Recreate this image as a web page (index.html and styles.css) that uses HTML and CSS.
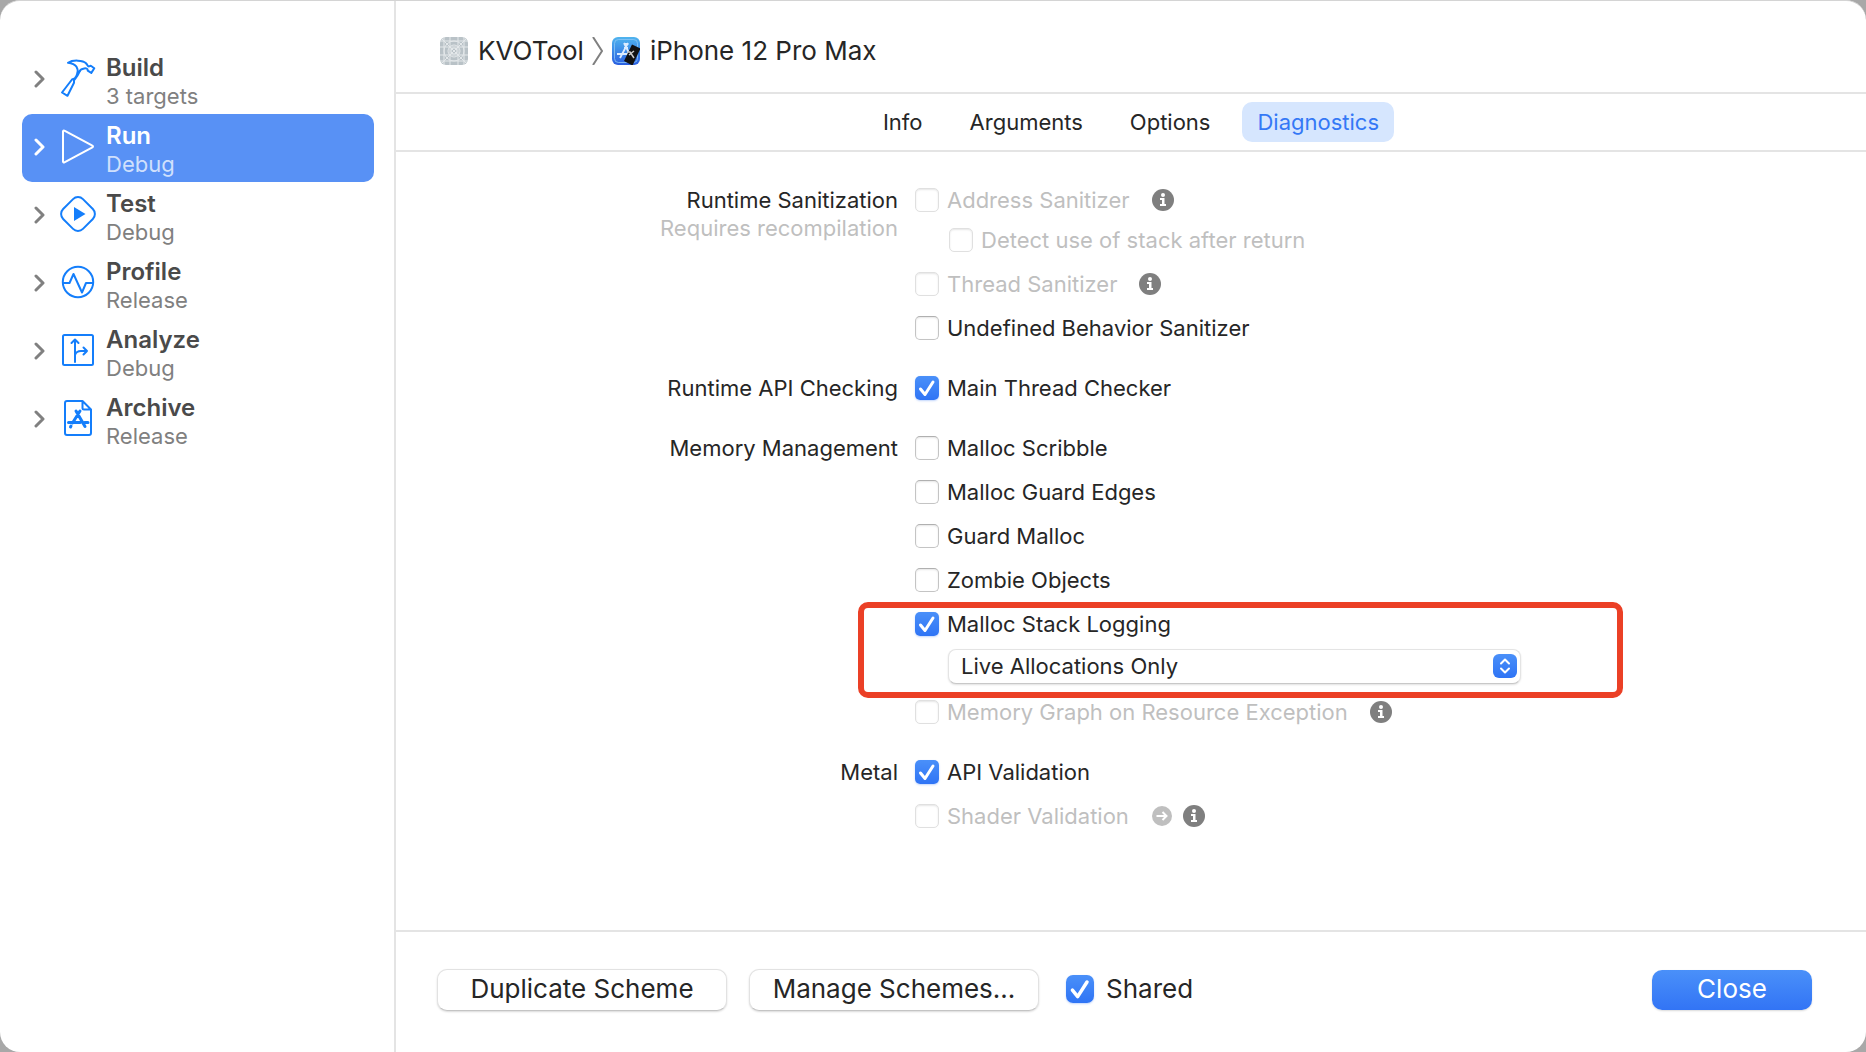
FILE: index.html
```html
<!DOCTYPE html>
<html lang="en">
<head>
    <meta charset="UTF-8">
    <meta name="viewport" content="width=device-width, initial-scale=1.0">
    <title>Edit Scheme</title>
    <link rel="stylesheet" href="styles.css">
</head>
<body>

    <div class="window">
        <nav class="sidebar">
            <a href="#build" class="action">
                <svg class="chevron" viewBox="0 0 12 18"><path d="M2 2l7 7-7 7"/></svg>
                <svg class="action-icon" viewBox="0 0 36 36"><path d="M8 2.800C13 -.5 23 .2 26 3.200c1.500 1.500 1.500 3 3 3.200l1.800-.6 3.500 2.400-3 4.700-3.600-2.300c.3-2-1.500-2.500-3.500-2.200-2.500.4-3.700 1-4.200 2.300L17.500 13c.8-4.500-.5-9.200-9.500-10.200z"/><path d="M17.500 13c-.6 2-1.500 4-2.700 5.300L12 19.500 2 32.500l5.500 3.300 6.500-13V20.500c2-2.500 2.500-3.500 3.500-5L20 10.700"/></svg>
                <span class="action-text"><b>Build</b><small>3 targets</small></span>
            </a>
            <a href="#run" class="action selected">
                <svg class="chevron" viewBox="0 0 12 18"><path d="M2 2l7 7-7 7"/></svg>
                <svg class="action-icon" viewBox="0 0 36 36"><path d="M3 3.500v30c0 .8.700 1.200 1.400.8l28-15c.8-.4.8-1.200 0-1.600l-28-15C3.700 2.300 3 2.700 3 3.500z"/></svg>
                <span class="action-text"><b>Run</b><small>Debug</small></span>
            </a>
            <a href="#test" class="action">
                <svg class="chevron" viewBox="0 0 12 18"><path d="M2 2l7 7-7 7"/></svg>
                <svg class="action-icon" viewBox="0 0 36 36"><rect x="4" y="4" width="28" height="28" rx="7" transform="rotate(45 18 18)"/><path class="solid" d="M14 11v14l11.500-7z"/></svg>
                <span class="action-text"><b>Test</b><small>Debug</small></span>
            </a>
            <a href="#profile" class="action">
                <svg class="chevron" viewBox="0 0 12 18"><path d="M2 2l7 7-7 7"/></svg>
                <svg class="action-icon" viewBox="0 0 36 36"><circle cx="18" cy="18" r="15.200"/><path d="M3 19h6.500l4-9 8.500 18.500L26 19h7"/></svg>
                <span class="action-text"><b>Profile</b><small>Release</small></span>
            </a>
            <a href="#analyze" class="action">
                <svg class="chevron" viewBox="0 0 12 18"><path d="M2 2l7 7-7 7"/></svg>
                <svg class="action-icon" viewBox="0 0 36 36"><rect x="3" y="3" width="30" height="30" rx="1.500"/><path d="M15 30V8M11.500 11L15 7.500l3.500 3.500M15 23c1-3 3-4 6-4h6M23.500 15.500L27 19l-3.500 3.500"/></svg>
                <span class="action-text"><b>Analyze</b><small>Debug</small></span>
            </a>
            <a href="#archive" class="action">
                <svg class="chevron" viewBox="0 0 12 18"><path d="M2 2l7 7-7 7"/></svg>
                <svg class="action-icon" viewBox="0 0 36 36"><path d="M7 1h15.500l8.500 8.500V33c0 1.200-.6 2-2 2H7c-1.300 0-2-.8-2-2V3c0-1.300.7-2 2-2zM22.500 1v7c0 1 .5 1.500 1.500 1.500h7"/><path class="thick" d="M16 11l9 15.500M20 11l-7.500 12M11 26l-.5 1M8.500 22.500H20M24.500 22.500H28"/></svg>
                <span class="action-text"><b>Archive</b><small>Release</small></span>
            </a>
        </nav>

        <main class="editor">
            <header class="path-bar">
                <svg class="app-icon" viewBox="0 0 28 28"><rect width="28" height="28" rx="6" fill="#b9c2c7"/><g fill="none" stroke="#e4e8ea"><path d="M2 2l24 24M26 2L2 26M10 0v28M18 0v28M0 10h28M0 18h28M4 0v28M24 0v28M0 4h28M0 24h28"/><circle cx="14" cy="14" r="10"/><circle cx="14" cy="14" r="6"/><circle cx="14" cy="14" r="3"/></g></svg>
                <span class="path-name">KVOTool</span>
                <svg class="path-arrow" viewBox="0 0 12 28"><path d="M1 0l9 14-9 14"/></svg>
                <svg class="app-icon" viewBox="0 0 28 28"><defs><linearGradient id="sim" x2="0" y2="1"><stop offset="0" stop-color="#4fb4ee"/><stop offset="1" stop-color="#2a5fe0"/></linearGradient></defs><rect width="28" height="28" rx="6" fill="url(#sim)"/><rect x="2.500" y="2.500" width="23" height="23" rx="4" fill="none" stroke="#8cc6f5" stroke-width=".8"/><path d="M12 6l7 14M16 6L8 21M5 17h18M12.500 7h4M12 11h4" stroke="#dcecff" stroke-width="1.800" fill="none"/><path d="M20 7.500l8.500 4-8 17-8.500-4.500z" fill="#111"/><path d="M15 15h3l4 6M17 18l5-4" stroke="#ccc" stroke-width="1.500" fill="none"/></svg>
                <span class="path-name">iPhone 12 Pro Max</span>
            </header>

            <div class="tabs">
                <button class="tab">Info</button>
                <button class="tab">Arguments</button>
                <button class="tab">Options</button>
                <button class="tab active">Diagnostics</button>
            </div>

            <form class="diagnostics">
                <div class="group-label">Runtime Sanitization<span class="note">Requires recompilation</span></div>
                <div class="group">
                    <div class="row">
                        <label class="check"><input type="checkbox" disabled>Address Sanitizer</label>
                        <svg class="info" viewBox="0 0 22 22"><circle cx="11" cy="11" r="11"/><circle class="mark" cx="11" cy="6" r="2"/><path class="mark" d="M8 9h4.500v6H14v2H8v-2h2v-4H8z"/></svg>
                    </div>
                    <div class="row nested">
                        <label class="check"><input type="checkbox" disabled>Detect use of stack after return</label>
                    </div>
                    <div class="row">
                        <label class="check"><input type="checkbox" disabled>Thread Sanitizer</label>
                        <svg class="info" viewBox="0 0 22 22"><circle cx="11" cy="11" r="11"/><circle class="mark" cx="11" cy="6" r="2"/><path class="mark" d="M8 9h4.500v6H14v2H8v-2h2v-4H8z"/></svg>
                    </div>
                    <div class="row">
                        <label class="check"><input type="checkbox">Undefined Behavior Sanitizer</label>
                    </div>
                </div>

                <div class="group-label">Runtime API Checking</div>
                <div class="group">
                    <div class="row">
                        <label class="check"><input type="checkbox" checked>Main Thread Checker</label>
                    </div>
                </div>

                <div class="group-label">Memory Management</div>
                <div class="group">
                    <div class="row">
                        <label class="check"><input type="checkbox">Malloc Scribble</label>
                    </div>
                    <div class="row">
                        <label class="check"><input type="checkbox">Malloc Guard Edges</label>
                    </div>
                    <div class="row">
                        <label class="check"><input type="checkbox">Guard Malloc</label>
                    </div>
                    <div class="row">
                        <label class="check"><input type="checkbox">Zombie Objects</label>
                    </div>
                    <div class="highlighted">
                        <div class="row">
                            <label class="check"><input type="checkbox" checked>Malloc Stack Logging</label>
                        </div>
                        <div class="row select-row">
                            <select class="popup" aria-label="Malloc Stack Logging">
                                <option>Live Allocations Only</option>
                                <option>All Allocation and Free History</option>
                            </select>
                            <svg class="stepper" viewBox="0 0 24 24"><path d="M8 9.500l4-4 4 4M8 14.500l4 4 4-4"/></svg>
                        </div>
                    </div>
                    <div class="row">
                        <label class="check"><input type="checkbox" disabled>Memory Graph on Resource Exception</label>
                        <svg class="info" viewBox="0 0 22 22"><circle cx="11" cy="11" r="11"/><circle class="mark" cx="11" cy="6" r="2"/><path class="mark" d="M8 9h4.500v6H14v2H8v-2h2v-4H8z"/></svg>
                    </div>
                </div>

                <div class="group-label">Metal</div>
                <div class="group">
                    <div class="row">
                        <label class="check"><input type="checkbox" checked>API Validation</label>
                    </div>
                    <div class="row">
                        <label class="check"><input type="checkbox" disabled>Shader Validation</label>
                        <svg class="info go" viewBox="0 0 22 22"><circle cx="11" cy="11" r="10"/><path class="arrow" d="M5.500 11h10M11.500 7l4 4-4 4"/></svg>
                        <svg class="info" viewBox="0 0 22 22"><circle cx="11" cy="11" r="11"/><circle class="mark" cx="11" cy="6" r="2"/><path class="mark" d="M8 9h4.500v6H14v2H8v-2h2v-4H8z"/></svg>
                    </div>
                </div>
            </form>

            <footer class="footer">
                <button class="btn">Duplicate Scheme</button>
                <button class="btn">Manage Schemes...</button>
                <label class="check shared"><input type="checkbox" checked>Shared</label>
                <button class="btn primary">Close</button>
            </footer>
        </main>
    </div>

</body>
</html>
```
FILE: styles.css
```css
* {
    box-sizing: border-box;
}

body {
    margin: 0;
    background: #a8a8a8;
    color: #262626;
    font-family: Inter, "Liberation Sans", sans-serif;
    font-size: 22px;
    line-height: 28px;
}

button, select {
    font: inherit;
    color: inherit;
}

.window {
    display: flex;
    min-height: 100vh;
    background: #fff;
    border-top: 1px solid #d4d4d4;
    border-radius: 20px;
    overflow: hidden;
}

/* Sidebar */
.sidebar {
    width: 396px;
    flex-shrink: 0;
    padding: 45px 20px 0 22px;
    border-right: 2px solid #e4e4e4;
}

.action {
    display: flex;
    align-items: center;
    height: 68px;
    padding-left: 12px;
    border-radius: 10px;
    color: #4a4a4a;
    text-decoration: none;
}

.action.selected {
    background: #5891f5;
    color: #fff;
}

.chevron {
    width: 12px;
    height: 18px;
    margin: 0 14px 2px 0;
    fill: none;
    stroke: #808080;
    stroke-width: 3;
    stroke-linecap: round;
    stroke-linejoin: round;
}

.action-icon {
    width: 36px;
    height: 36px;
    margin: 0 10px 4px 0;
    overflow: visible;
    fill: none;
    stroke: #147efb;
    stroke-width: 2;
    stroke-linejoin: round;
    stroke-linecap: round;
}

.action-icon .solid {
    fill: #147efb;
    stroke: none;
}

.action-icon .thick {
    stroke-width: 3;
}

.selected .chevron, .selected .action-icon {
    stroke: #fff;
}

.action-text {
    display: flex;
    flex-direction: column;
    padding-top: 3px;
}

.action-text b {
    font-size: 24px;
    font-weight: 600;
}

.action-text small {
    font-size: 22px;
    color: #808080;
}

.selected .action-text small {
    color: #d0e0fc;
}

/* Editor */
.editor {
    flex: 1;
    display: flex;
    flex-direction: column;
}

.path-bar {
    display: flex;
    align-items: center;
    height: 93px;
    padding: 8px 44px 0;
    border-bottom: 2px solid #e4e4e4;
    font-size: 26px;
}

.app-icon {
    width: 28px;
    height: 28px;
    margin-right: 10px;
}

.path-arrow {
    width: 12px;
    height: 28px;
    margin: 0 8px;
    fill: none;
    stroke: #808080;
    stroke-width: 2;
}

.tabs {
    display: flex;
    justify-content: center;
    align-items: center;
    gap: 17px;
    height: 58px;
    border-bottom: 2px solid #e4e4e4;
}

.tab {
    height: 40px;
    padding: 0 15px;
    border: none;
    border-radius: 10px;
    background: none;
}

.tab.active {
    background: #d6e6fe;
    color: #3478f6;
}

.diagnostics {
    flex: 1;
    display: grid;
    grid-template-columns: 502fr 606fr;
    align-content: start;
    gap: 16px 17px;
    padding: 26px 345px 26px 0;
}

.group-label {
    padding-top: 8px;
    text-align: right;
}

.note {
    display: block;
    color: #bfbfbf;
}

.row {
    display: flex;
    align-items: center;
    height: 44px;
}

.row.nested {
    height: 36px;
    margin: 0 0 4px 34px;
}

.check {
    display: flex;
    align-items: center;
    gap: 8px;
    white-space: nowrap;
}

.check:has(input:disabled) {
    color: #bfbfbf;
}

.check input {
    appearance: none;
    width: 24px;
    height: 24px;
    margin: 0;
    border: 1px solid #c4c4c4;
    border-top-color: #b0b0b0;
    border-radius: 5px;
    background: #fff;
    box-shadow: inset 0 1px 2px rgba(0, 0, 0, 0.1);
}

.check input:disabled {
    border-color: #e0e0e0;
}

.check input:checked {
    border: none;
    background: url("data:image/svg+xml,%3Csvg xmlns='http://www.w3.org/2000/svg' viewBox='0 0 24 24'%3E%3Cpath d='M5.500 13l4.500 5.500L18 6' fill='none' stroke='white' stroke-width='3' stroke-linecap='round' stroke-linejoin='round'/%3E%3C/svg%3E"), linear-gradient(#4a90f9, #2f74f5);
    box-shadow: 0 1px 2px rgba(52, 120, 246, 0.3);
}

.info {
    width: 22px;
    height: 22px;
    margin-left: 22px;
    fill: #7f7f7f;
}

.info .mark {
    fill: #fff;
}

.info.go {
    fill: #bfbfbf;
}

.info .arrow {
    fill: none;
    stroke: #fff;
    stroke-width: 2;
}

.go + .info {
    margin-left: 10px;
}

/* Red frame drawn over the stack logging rows */
.highlighted {
    position: relative;
    margin-bottom: 4px;
}

.highlighted::after {
    content: "";
    position: absolute;
    top: 0;
    right: -102px;
    bottom: -12px;
    left: -57px;
    border: 6px solid #eb4026;
    border-radius: 10px;
    pointer-events: none;
}

.select-row {
    position: relative;
    height: 40px;
    margin-left: 33px;
}

.popup {
    appearance: none;
    width: 100%;
    height: 35px;
    padding: 0 12px;
    border: 1px solid #e4e4e4;
    border-bottom-color: #c8c8c8;
    border-radius: 8px;
    background: #fff;
    box-shadow: 0 1px 2px rgba(0, 0, 0, 0.12);
}

.stepper {
    position: absolute;
    right: 4px;
    width: 24px;
    height: 24px;
    border-radius: 6px;
    background: linear-gradient(#4a90f9, #2f74f5);
    fill: none;
    stroke: #fff;
    stroke-width: 2;
    stroke-linecap: round;
    stroke-linejoin: round;
    pointer-events: none;
}

/* Footer */
.footer {
    display: flex;
    align-items: center;
    gap: 22px;
    height: 122px;
    padding: 0 54px 4px 41px;
    border-top: 2px solid #e4e4e4;
    font-size: 26px;
}

.btn {
    width: 290px;
    height: 42px;
    padding: 0 0 2px;
    border: 1px solid #e2e2e2;
    border-bottom-color: #c4c4c4;
    border-radius: 10px;
    background: #fff;
    box-shadow: 0 1px 2px rgba(0, 0, 0, 0.15);
}

.shared {
    gap: 12px;
    margin: 0 0 3px 5px;
}

.shared input {
    width: 28px;
    height: 28px;
    border-radius: 7px;
}

.btn.primary {
    width: 160px;
    height: 40px;
    margin-left: auto;
    border: none;
    background: linear-gradient(#4a90f9, #3274f5);
    color: #fff;
}
```
